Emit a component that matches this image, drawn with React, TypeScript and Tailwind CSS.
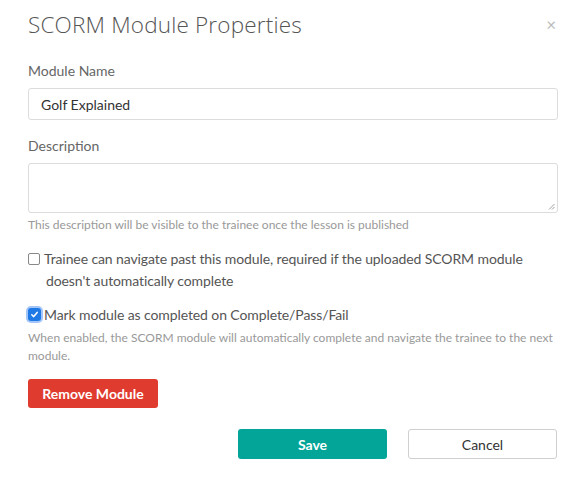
import React from "react";

export default function App() {
  return (
    <div className="w-[579px] h-[492px] bg-white relative" style={{ fontFamily: "Lato, 'Liberation Sans', sans-serif" }}>
      <div className="pl-[28px] pr-[22px] pt-[11px]">
        <div className="flex items-center justify-between h-[28px]">
          <h1 className="text-[22.5px] font-light text-[#555] tracking-[0.18px]" style={{ fontFamily: "'Open Sans', Lato, sans-serif" }}>
            SCORM Module Properties
          </h1>
          <span className="text-[#bbb] text-[17px] leading-none mr-[1px] mt-[-2px]">×</span>
        </div>

        <div className="mt-[22px] text-[14px] leading-[20px] text-[#666]">Module Name</div>
        <div className="mt-[7px] h-[32px] w-[530px] border border-[#dcdcdc] rounded-[3px] flex items-center pl-[12px] text-[14px] text-[#333]">
          Golf Explained
        </div>

        <div className="mt-[16px] text-[14px] leading-[20px] text-[#666]">Description</div>
        <div className="mt-[7px] h-[50px] w-[530px] border border-[#dcdcdc] rounded-[3px] relative">
          <svg className="absolute right-[2px] bottom-[2px]" width="7" height="7" viewBox="0 0 7 7">
            <line x1="1" y1="6.5" x2="6.5" y2="1" stroke="#888" strokeWidth="0.8" />
            <line x1="4" y1="6.5" x2="6.5" y2="4" stroke="#888" strokeWidth="0.8" />
          </svg>
        </div>
        <div className="mt-[4px] text-[12px] leading-[16px] text-[#999]">
          This description will be visible to the trainee once the lesson is published
        </div>

        <div className="mt-[15px] flex text-[14px] leading-[22px] text-[#555] tracking-[-0.1px]">
          <span className="mt-[5px] w-[12px] h-[12px] border border-[#888] rounded-[2px] bg-white shrink-0" />
          <span className="ml-[4px]">
            Trainee can navigate past this module, required if the uploaded SCORM module<br />
            <span className="pl-[2px]">doesn't automatically complete</span>
          </span>
        </div>

        <div className="mt-[12px] flex text-[14px] leading-[22px] text-[#555] tracking-[-0.1px]">
          <span className="mt-[4px] w-[13px] h-[13px] rounded-[3px] bg-[#1f7ae6] shrink-0 flex items-center justify-center shadow-[0_0_0_2px_rgba(90,150,240,0.55)]">
            <svg width="9" height="9" viewBox="0 0 9 9">
              <path d="M1.8 4.8 L3.7 6.6 L7.2 2.4" stroke="white" strokeWidth="1.5" fill="none" strokeLinecap="round" strokeLinejoin="round" />
            </svg>
          </span>
          <span className="ml-[3px]">Mark module as completed on Complete/Pass/Fail</span>
        </div>
        <div className="mt-[3px] text-[12px] leading-[18px] text-[#999]">
          When enabled, the SCORM module will automatically complete and navigate the trainee to the next module.
        </div>

        <button className="mt-[14px] h-[29px] w-[130px] rounded-[3px] bg-[#df3b2e] text-white text-[14px] font-bold">
          Remove Module
        </button>

        <div className="mt-[21px] flex justify-end gap-[21px]">
          <button className="h-[30px] w-[149px] rounded-[3px] bg-[#02a597] text-white text-[14px] font-bold">Save</button>
          <button className="h-[30px] w-[149px] rounded-[3px] bg-white border border-[#cfcfcf] text-[#333] text-[14px]">Cancel</button>
        </div>
      </div>
    </div>
  );
}
